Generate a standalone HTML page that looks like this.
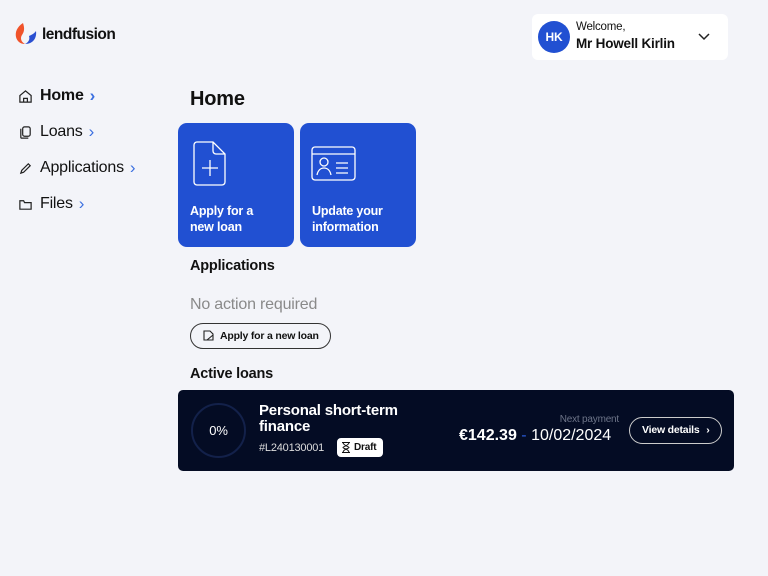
<!DOCTYPE html>
<html><head><meta charset="utf-8"><style>
*{box-sizing:border-box;margin:0;padding:0}
body{width:768px;height:576px;background:#f3f4f9;font-family:"Liberation Sans",sans-serif;color:#111;position:relative;overflow:hidden;letter-spacing:-0.2px}
.abs{position:absolute}
.nav{left:18px;font-size:16px;display:flex;align-items:center;gap:7px}
.nav svg{width:15px;height:15px}
.chev{color:#3b6fe0;font-size:17px;margin-left:-1px}
.card{background:#2150d2;border-radius:9px;width:116px;height:124px;color:#fff;top:123px}
.card .t{position:absolute;left:12px;top:80px;font-size:12.5px;font-weight:bold;line-height:16px}
</style></head><body>
<div class="abs" style="left:15px;top:22px;width:22px;height:24px">
<svg viewBox="0 0 22 24" width="22" height="24"><path d="M8 1C2 5 0 10 1 15c1 4 4 7 9 7-4-2-5-6-3-9 2-3 3-6 1-12z" fill="#f0532b"/><path d="M21 9c1 7-3 13-11 13 4-2 5-5 4-8 2-1 5-2 7-5z" fill="#2a4fd1"/></svg></div>
<div class="abs" style="left:42px;top:26px;font-size:15.5px;font-weight:bold;letter-spacing:-0.5px">lendfusion</div>

<div class="abs nav" style="top:86px;font-weight:bold"><svg viewBox="0 0 16 16" fill="none" stroke="#222" stroke-width="1.3"><path d="M2 7l6-5 6 5v7H2z M6 14v-4h4v4"/></svg>Home<span class="chev">›</span></div>
<div class="abs nav" style="top:122px"><svg viewBox="0 0 16 16" fill="none" stroke="#222" stroke-width="1.3"><rect x="5" y="2" width="8" height="10" rx="2"/><path d="M3 4v9a1 1 0 001 1h7"/></svg>Loans<span class="chev">›</span></div>
<div class="abs nav" style="top:158px"><svg viewBox="0 0 16 16" fill="none" stroke="#222" stroke-width="1.3"><path d="M3 13l1-3 7-7 2 2-7 7z"/></svg>Applications<span class="chev">›</span></div>
<div class="abs nav" style="top:194px"><svg viewBox="0 0 16 16" fill="none" stroke="#222" stroke-width="1.3"><path d="M2 4h4l1 2h7v7H2z"/></svg>Files<span class="chev">›</span></div>

<div class="abs" style="left:532px;top:14px;width:196px;height:46px;background:#fff;border-radius:6px">
<div class="abs" style="left:6px;top:7px;width:32px;height:32px;border-radius:50%;background:#2150d2;color:#fff;font-size:12px;font-weight:bold;text-align:center;line-height:32px">HK</div>
<div class="abs" style="left:44px;top:7px;font-size:11.5px">Welcome,</div>
<div class="abs" style="left:44px;top:22px;font-size:13.5px;font-weight:bold">Mr Howell Kirlin</div>
<svg class="abs" style="left:166px;top:19px" width="12" height="8" viewBox="0 0 12 8"><path d="M1 1l5 5 5-5" fill="none" stroke="#222" stroke-width="1.5"/></svg>
</div>

<div class="abs" style="left:190px;top:88px;font-size:20px;font-weight:bold">Home</div>
<div class="abs card" style="left:178px">
<svg class="abs" style="left:15px;top:18px" width="34" height="45" viewBox="0 0 34 45" fill="none" stroke="#fff" stroke-width="1.3"><path d="M4 1h16l12 12v28a3 3 0 01-3 3H4a3 3 0 01-3-3V4a3 3 0 013-3z M20 1v9a3 3 0 003 3h9 M17 19v16 M9 27h16"/></svg>
<div class="t">Apply for a<br>new loan</div></div>
<div class="abs card" style="left:300px">
<svg class="abs" style="left:11px;top:23px" width="45" height="35" viewBox="0 0 45 35" fill="none" stroke="#fff" stroke-width="1.3"><rect x="1" y="1" width="43" height="33" rx="3"/><path d="M1 8h43 M6 29c1-5 4-7 7-7s6 2 7 7 M25 17h12 M25 22h12 M25 27h12"/><circle cx="13" cy="16" r="4"/></svg>
<div class="t">Update your<br>information</div></div>

<div class="abs" style="left:190px;top:258px;font-size:14.5px;font-weight:bold">Applications</div>
<div class="abs" style="left:190px;top:296px;font-size:16px;color:#8a8a8a">No action required</div>
<div class="abs" style="left:190px;top:323px;width:141px;height:26px;border:1px solid #333;border-radius:13px;font-size:10.5px;font-weight:bold;line-height:24px;padding-left:29px;white-space:nowrap">
<svg class="abs" style="left:12px;top:6px" width="12" height="12" viewBox="0 0 12 12" fill="none" stroke="#222" stroke-width="1.1"><path d="M1 1h6l3 3v6H1z M4 10l6-5"/></svg>Apply for a new loan</div>

<div class="abs" style="left:190px;top:366px;font-size:14.5px;font-weight:bold">Active loans</div>
<div class="abs" style="left:178px;top:390px;width:556px;height:81px;background:#040c24;border-radius:5px;color:#fff">
<div class="abs" style="left:13px;top:13px;width:55px;height:55px;border-radius:50%;border:2px solid #13214a;text-align:center;line-height:51px;font-size:13px">0%</div>
<div class="abs" style="left:81px;top:13px;font-size:15px;font-weight:bold;line-height:16px">Personal short-term<br>finance</div>
<div class="abs" style="left:81px;top:52px;font-size:11px;color:#ddd">#L240130001</div>
<div class="abs" style="left:159px;top:48px;width:46px;height:19px;background:#fff;color:#111;border-radius:4px;font-size:10px;font-weight:bold;line-height:19px;padding-left:17px">
<svg class="abs" style="left:5px;top:4px" width="8" height="11" viewBox="0 0 8 11" fill="none" stroke="#111" stroke-width="1"><path d="M0 .5h8M0 10.5h8M1 .5c0 3 6 4 6 5S1 7 1 10.5M7 .5c0 3-6 4-6 5s6 1.5 6 5"/></svg>Draft</div>
<div class="abs" style="left:360px;top:24px;width:81px;text-align:right;font-size:10px;color:#6d7488">Next payment</div>
<div class="abs" style="left:281px;top:37px;font-size:16px;white-space:nowrap;letter-spacing:0"><b>€142.39</b> <span style="color:#2a5ad8">-</span> 10/02/2024</div>
<div class="abs" style="left:451px;top:27px;width:93px;height:27px;border:1px solid #ccc;border-radius:14px;font-size:10.5px;font-weight:bold;line-height:25px;padding-left:12px;white-space:nowrap">View details <span style="margin-left:4px">›</span></div>
</div>
</body></html>
